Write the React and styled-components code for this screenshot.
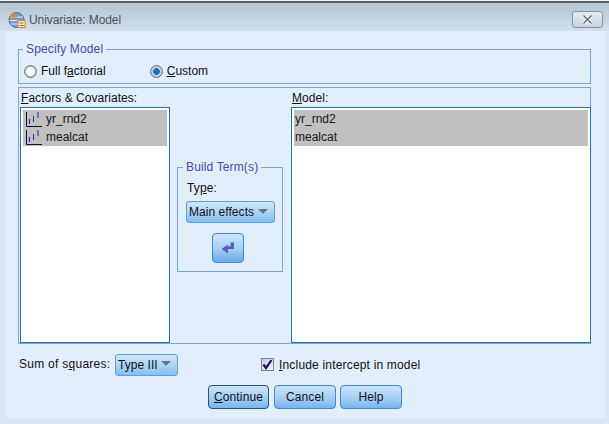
import React from 'react';
import styled, { createGlobalStyle } from 'styled-components';

const GlobalStyle = createGlobalStyle`
  html, body {
    margin: 0;
    padding: 0;
    overflow: hidden;
    background: #eef0f2;
  }
  * {
    box-sizing: border-box;
  }
`;

const Window = styled.div`
  width: 609px;
  height: 423px;
  display: flex;
  flex-direction: column;
  border-top: 2px solid #5a5f66;
  margin-top: 1px;
  background: #dbe6f2;
  font-family: 'Liberation Sans', Arial, sans-serif;
  font-size: 12px;
  letter-spacing: 0.14px;
  color: #101018;
`;

const TitleBar = styled.header`
  height: 28px;
  flex: none;
  display: flex;
  align-items: center;
  padding: 5px 5px 0 8px;
  gap: 3px;
  background: linear-gradient(#b4c4d3, #d3e0ec);
`;

const TitleText = styled.span`
  flex: 1;
  font-size: 12px;
  letter-spacing: -0.08px;
  color: #4a5058;
`;

const CloseButton = styled.div`
  width: 31px;
  height: 17px;
  margin-right: 1px;
  border: 1px solid #8695a4;
  border-radius: 3px;
  background: linear-gradient(#e3ebf2, #c6d3df);
  display: flex;
  align-items: center;
  justify-content: center;
`;

const Client = styled.main`
  flex: 1;
  margin: 0 4px 6px 6px;
  padding: 18px 14px 0 12px;
  background: #e2eefb;
  display: flex;
  flex-direction: column;
`;

const SpecifyGroup = styled.fieldset`
  margin: -6px 0 0;
  padding: 8px 0 0 5px;
  height: 41px;
  min-width: 0;
  border: 1px solid #7ba6cf;
  display: flex;
  align-items: flex-start;
  gap: 44px;
`;

const Legend = styled.legend`
  margin-left: ${(p) => p.$indent}px;
  padding: 0 3px;
  font-size: 12px;
  line-height: 13px;
  color: #4a4aa8;
`;

const RadioLabel = styled.label`
  display: flex;
  align-items: center;
  gap: 4px;
  letter-spacing: 0;
`;

const RadioDot = styled.span`
  width: 13px;
  height: 13px;
  border-radius: 50%;
  border: 1px solid #6b747c;
  box-shadow: inset 0 0 0 1px #c3c9cf;
  background: ${(p) =>
    p.$checked
      ? 'radial-gradient(circle, #1e6fc4 0 3px, #c3ccd6 3.6px)'
      : 'radial-gradient(circle, #fff 0 3px, #dde2e7 5px)'};
`;

const Key = styled.span`
  text-decoration: underline;
  text-underline-offset: 1px;
`;

const ModelPanel = styled.section`
  margin-top: 3px;
  height: 257px;
  border: 1px solid #7ba6cf;
  padding: 0 0 0 1px;
  display: grid;
  grid-template-columns: 150px 121px 300px;
`;

const ListColumn = styled.div`
  display: flex;
  flex-direction: column;
  min-height: 0;
`;

const ListTitle = styled.div`
  height: 19px;
  padding: 3px 0 0 1px;
  line-height: 15px;
  letter-spacing: 0.04px;
`;

const ListBox = styled.ul`
  flex: 1;
  margin: 0;
  padding: 2px 2px 0;
  list-style: none;
  background: #fff;
  border: 1px solid #2a6eaa;
`;

const ListRow = styled.li`
  height: 18px;
  background: #c0c0c0;
  display: flex;
  align-items: center;
  gap: 4px;
  padding-left: ${(p) => (p.$plain ? '1px' : '3px')};
  letter-spacing: 0;
  color: #181818;
`;

const BuildColumn = styled.div`
  padding: 73px 0 0 7px;
`;

const BuildGroup = styled.fieldset`
  margin: 0;
  padding: 7px 0 0 8px;
  width: 106px;
  height: 111px;
  min-width: 0;
  border: 1px solid #7ba6cf;
  display: flex;
  flex-direction: column;
  align-items: flex-start;
`;

const TypeLabel = styled.div`
  margin-left: 1px;
  line-height: 14px;
`;

const Dropdown = styled.div`
  height: 22px;
  width: ${(p) => p.$width}px;
  border: 1px solid #57a0e0;
  border-radius: 3px;
  background: linear-gradient(#cfe6fa, #a9d2f5 55%, #85bcf0);
  display: flex;
  align-items: center;
  justify-content: space-between;
  padding: 0 6px 0 2px;
  letter-spacing: 0.05px;
`;

const BuildDropdown = styled(Dropdown)`
  margin-top: 6px;
`;

const Caret = styled.span`
  width: 0;
  height: 0;
  border-left: 5px solid transparent;
  border-right: 5px solid transparent;
  border-top: 5px solid #6d7680;
  margin-bottom: 2px;
`;

const MoveButton = styled.div`
  width: 32px;
  height: 30px;
  margin: 10px 0 0 26px;
  border: 1px solid #3c8ad8;
  border-radius: 4px;
  background: linear-gradient(#cfe5f9, #a6d0f5 50%, #6eaaea);
  display: flex;
  align-items: center;
  justify-content: center;
`;

const OptionsRow = styled.div`
  display: flex;
  align-items: center;
  margin-top: 9px;
  height: 23px;
`;

const OptionLabel = styled.span`
  width: 96px;
  margin: -2px 0 0 1px;
  letter-spacing: 0.27px;
`;

const CheckLabel = styled.label`
  display: flex;
  align-items: center;
  gap: 5px;
  margin-left: 83px;
  letter-spacing: 0.18px;
`;

const CheckBox = styled.span`
  width: 13px;
  height: 13px;
  border: 1px solid #7d8790;
  background: linear-gradient(135deg, #c9ced4, #f1f3f5);
  display: flex;
  align-items: center;
  justify-content: center;
`;

const ButtonRow = styled.div`
  display: flex;
  gap: 4px;
  margin: 9px 0 0 190px;
`;

const ActionButton = styled.button`
  width: ${(p) => p.$width}px;
  height: 24px;
  margin-right: ${(p) => (p.$primary ? '1px' : '0')};
  padding: 0;
  font: inherit;
  letter-spacing: inherit;
  color: #101018;
  border: 1px solid ${(p) => (p.$primary ? '#27517c' : '#3c8ad8')};
  border-radius: 4px;
  background: linear-gradient(#cbe3f9, #a9d2f6 50%, #79b4ee);
`;

function TitleIcon() {
  return (
    <svg width="18" height="18" viewBox="0 0 18 18">
      <circle cx="8.5" cy="9" r="7.5" fill="#6f9fc8" stroke="#46719a" />
      <path d="M2 6h13M1.5 9.5h14M3 13h11" stroke="#dce9f4" strokeWidth="1.2" />
      <path d="M5.5 1.5v7M2 5h7" stroke="#ef8a1e" strokeWidth="2" />
      <rect x="10" y="9.5" width="7" height="7" fill="#f6efe2" stroke="#e58219" />
      <path d="M11.5 12h4M11.5 14.5h4" stroke="#a4561a" strokeWidth="1.2" />
    </svg>
  );
}

function ScaleIcon() {
  return (
    <svg width="16" height="16" viewBox="0 0 16 16" style={{ flex: 'none' }}>
      <path d="M0.5 1v14.5H16" stroke="#101030" fill="none" />
      <path d="M3.5 8v5M12 1v6" stroke="#1c1cd8" />
      <path d="M7.5 5v6" stroke="#30309a" />
    </svg>
  );
}

const App = () => {
  return (
    <>
      <GlobalStyle />
      <Window>
        <TitleBar>
          <TitleIcon />
          <TitleText>Univariate: Model</TitleText>
          <CloseButton>
            <svg width="13" height="11" viewBox="0 0 13 11">
              <path d="M2.5 1.5l8 8M10.5 1.5l-8 8" stroke="#fff" strokeWidth="3.4" />
              <path d="M2.5 1.5l8 8M10.5 1.5l-8 8" stroke="#59636e" strokeWidth="1.4" />
            </svg>
          </CloseButton>
        </TitleBar>
        <Client>
          <SpecifyGroup>
            <Legend $indent={-1}>Specify Model</Legend>
            <RadioLabel>
              <RadioDot />
              <span>Full f<Key>a</Key>ctorial</span>
            </RadioLabel>
            <RadioLabel>
              <RadioDot $checked />
              <span><Key>C</Key>ustom</span>
            </RadioLabel>
          </SpecifyGroup>
          <ModelPanel>
            <ListColumn>
              <ListTitle><Key>F</Key>actors &amp; Covariates:</ListTitle>
              <ListBox>
                <ListRow><ScaleIcon />yr_rnd2</ListRow>
                <ListRow><ScaleIcon />mealcat</ListRow>
              </ListBox>
            </ListColumn>
            <BuildColumn>
              <BuildGroup>
                <Legend $indent={-3}>Build Term(s)</Legend>
                <TypeLabel>Ty<Key>p</Key>e:</TypeLabel>
                <BuildDropdown $width={89}>
                  Main effects
                  <Caret />
                </BuildDropdown>
                <MoveButton>
                  <svg width="14" height="13" viewBox="0 0 14 13">
                    <path d="M13 0.5v6.5H7v4.5L0.5 7 7 2.5v2H9.5V0.5z" fill="#5c5cc8" />
                  </svg>
                </MoveButton>
              </BuildGroup>
            </BuildColumn>
            <ListColumn>
              <ListTitle><Key>M</Key>odel:</ListTitle>
              <ListBox>
                <ListRow $plain>yr_rnd2</ListRow>
                <ListRow $plain>mealcat</ListRow>
              </ListBox>
            </ListColumn>
          </ModelPanel>
          <OptionsRow>
            <OptionLabel>Sum of s<Key>q</Key>uares:</OptionLabel>
            <Dropdown $width={63}>
              Type III
              <Caret />
            </Dropdown>
            <CheckLabel>
              <CheckBox>
                <svg width="11" height="11" viewBox="0 0 11 11">
                  <path d="M1.5 5.5l2.5 3.5L9.5 1" stroke="#12127a" strokeWidth="2.2" fill="none" />
                </svg>
              </CheckBox>
              <span><Key>I</Key>nclude intercept in model</span>
            </CheckLabel>
          </OptionsRow>
          <ButtonRow>
            <ActionButton $primary $width={61}><Key>C</Key>ontinue</ActionButton>
            <ActionButton $width={62}>Cancel</ActionButton>
            <ActionButton $width={62}>Help</ActionButton>
          </ButtonRow>
        </Client>
      </Window>
    </>
  );
};

export default App;
